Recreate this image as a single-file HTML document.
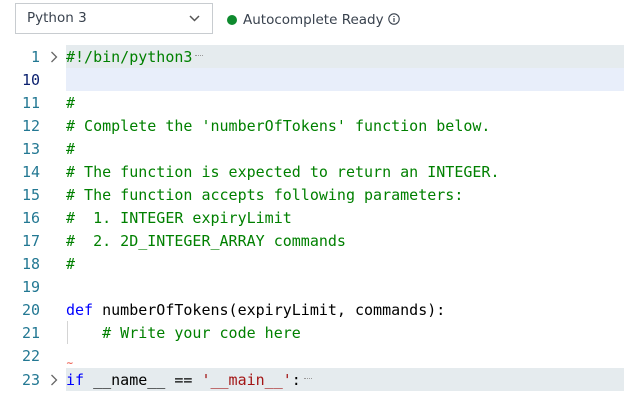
<!DOCTYPE html>
<html><head><style>
body{margin:0;width:624px;height:406px;background:#fff;overflow:hidden;font-family:"DejaVu Sans","Liberation Sans",sans-serif;position:relative}
.dd{position:absolute;left:15px;top:3px;width:198px;height:31px;border:1px solid #c8ccd0;box-sizing:border-box;font-size:13.5px;color:#39424e;line-height:29px;padding-left:11px}
.dd svg{position:absolute;right:12px;top:11px}
.ac{position:absolute;left:227px;top:10px;font-size:13.5px;color:#39424e;line-height:20px}
.dot{display:inline-block;width:10px;height:10px;border-radius:50%;background:#0e8a2e;margin-right:6px;vertical-align:-1px}
.ln{position:absolute;left:0;width:40px;text-align:right;font-family:"DejaVu Sans Mono",monospace;font-size:15px;color:#237893;height:23px;line-height:25px}
.cd{position:absolute;left:66px;right:0;font-family:"DejaVu Sans Mono",monospace;font-size:15px;height:23px;line-height:25px;white-space:pre;color:#000}
.c{color:#008000}.k{color:#0000ff}.s{color:#a31515}
.ar{position:absolute;left:50px;width:8px;height:12px}
.el{display:inline-block;width:8px;height:3px;border-top:1px dotted #999;vertical-align:3px;margin-left:3px}
</style></head><body>
<div class="dd">Python 3<svg width="11" height="7" viewBox="0 0 11 7"><path d="M1 1l4.5 4.5L10 1" fill="none" stroke="#555" stroke-width="1.5"/></svg></div>
<div class="ac"><span class="dot"></span>Autocomplete Ready <svg width="12" height="12" viewBox="0 0 12 12" style="vertical-align:-1px"><circle cx="6" cy="6" r="5.2" fill="none" stroke="#39424e" stroke-width="1.1"/><path d="M6 5v4M6 3v1" stroke="#39424e" stroke-width="1.2"/></svg></div>
<div style="position:absolute;left:66px;right:0;top:45px;height:23px;background:#e5ebee"></div>
<div style="position:absolute;left:66px;right:0;top:68px;height:23px;background:#e8eefa"></div>
<div style="position:absolute;left:66px;right:0;top:368px;height:23px;background:#e5ebee"></div>
<div style="position:absolute;left:67px;top:321px;height:23px;border-left:1px solid #d4d4d4"></div>

<div class="ln" style="top:45px">1</div><svg class="ar" style="top:51px" viewBox="0 0 8 12"><path d="M1.5 1l5 5-5 5" fill="none" stroke="#666" stroke-width="1.3"/></svg><div class="cd c" style="top:45px">#!/bin/python3<span class="el"></span></div>
<div class="ln" style="top:68px;color:#0b216f">10</div>
<div class="ln" style="top:91px">11</div><div class="cd c" style="top:91px">#</div>
<div class="ln" style="top:114px">12</div><div class="cd c" style="top:114px"># Complete the 'numberOfTokens' function below.</div>
<div class="ln" style="top:137px">13</div><div class="cd c" style="top:137px">#</div>
<div class="ln" style="top:160px">14</div><div class="cd c" style="top:160px"># The function is expected to return an INTEGER.</div>
<div class="ln" style="top:183px">15</div><div class="cd c" style="top:183px"># The function accepts following parameters:</div>
<div class="ln" style="top:206px">16</div><div class="cd c" style="top:206px">#  1. INTEGER expiryLimit</div>
<div class="ln" style="top:229px">17</div><div class="cd c" style="top:229px">#  2. 2D_INTEGER_ARRAY commands</div>
<div class="ln" style="top:252px">18</div><div class="cd c" style="top:252px">#</div>
<div class="ln" style="top:275px">19</div>
<div class="ln" style="top:298px">20</div><div class="cd" style="top:298px"><span class="k">def</span> numberOfTokens(expiryLimit, commands):</div>
<div class="ln" style="top:321px">21</div><div class="cd c" style="top:321px">    # Write your code here</div>
<div class="ln" style="top:344px">22</div>
<div style="position:absolute;left:66px;top:361px;font-size:9px;color:#e51400;line-height:6px">~</div>
<div class="ln" style="top:368px">23</div><svg class="ar" style="top:374px" viewBox="0 0 8 12"><path d="M1.5 1l5 5-5 5" fill="none" stroke="#666" stroke-width="1.3"/></svg><div class="cd" style="top:368px"><span class="k">if</span> __name__ == <span class="s">'__main__'</span>:<span class="el"></span></div>
</body></html>
